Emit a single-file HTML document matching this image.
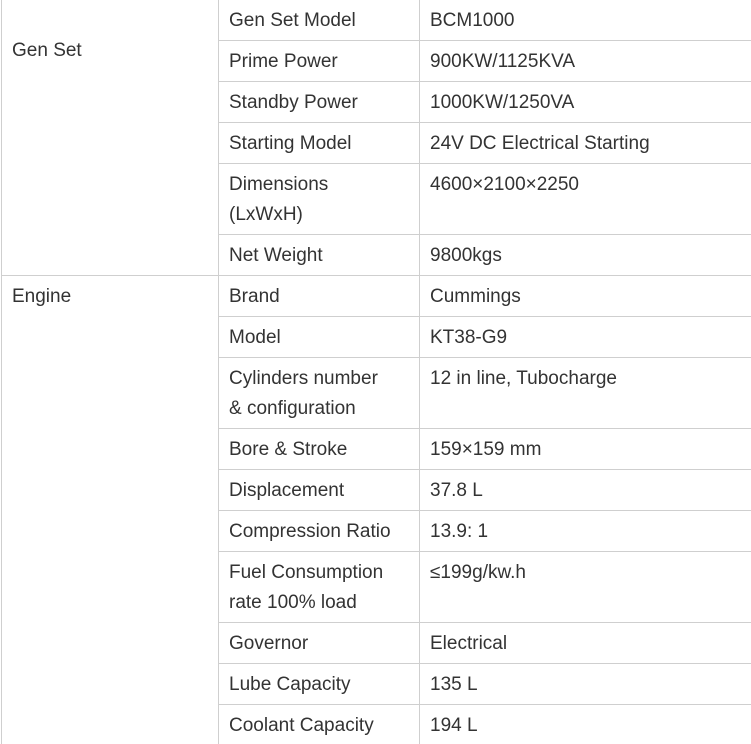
<!DOCTYPE html>
<html><head><style>
html,body{margin:0;padding:0;background:#fff;width:751px;height:744px;overflow:hidden;position:relative}
table{position:absolute;left:1px;top:-1px;border-collapse:collapse;width:750px;table-layout:fixed;font-family:"Liberation Sans",Arial,sans-serif;font-size:19px;color:#333}
td{border:1px solid #cfcfcf;padding:6px 10px 4px 10px;line-height:30px;vertical-align:top;white-space:nowrap}
</style></head><body>
<table>
<colgroup><col style="width:217px"><col style="width:201px"><col style="width:332px"></colgroup>
<tr><td rowspan="6" style="padding-top:36px">Gen Set</td><td>Gen Set Model</td><td>BCM1000</td></tr>
<tr><td>Prime Power</td><td>900KW/1125KVA</td></tr>
<tr><td>Standby Power</td><td>1000KW/1250VA</td></tr>
<tr><td>Starting Model</td><td>24V DC Electrical Starting</td></tr>
<tr><td>Dimensions<br>(LxWxH)</td><td>4600×2100×2250</td></tr>
<tr><td>Net Weight</td><td>9800kgs</td></tr>
<tr><td rowspan="11">Engine</td><td>Brand</td><td>Cummings</td></tr>
<tr><td>Model</td><td>KT38-G9</td></tr>
<tr><td>Cylinders number<br>&amp; configuration</td><td>12 in line, Tubocharge</td></tr>
<tr><td>Bore &amp; Stroke</td><td>159×159 mm</td></tr>
<tr><td>Displacement</td><td>37.8 L</td></tr>
<tr><td>Compression Ratio</td><td>13.9: 1</td></tr>
<tr><td>Fuel Consumption<br>rate 100% load</td><td>≤199g/kw.h</td></tr>
<tr><td>Governor</td><td>Electrical</td></tr>
<tr><td>Lube Capacity</td><td>135 L</td></tr>
<tr><td>Coolant Capacity</td><td>194 L</td></tr>
</table>
</body></html>
